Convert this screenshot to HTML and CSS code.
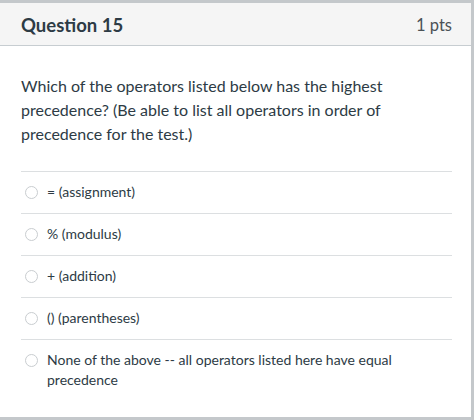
FILE: index.html
```html
<!DOCTYPE html>
<html lang="en">
<head>
    <meta charset="UTF-8">
    <title>Question 15</title>
    <link rel="stylesheet" href="styles.css">
</head>
<body>
    <!-- Quiz Question Card -->
    <div class="question">
        <div class="question-header">
            <span class="question-title">Question 15</span>
            <span class="question-points">1 pts</span>
        </div>

        <div class="question-body">
            <p class="question-text">Which of the operators listed below has the highest precedence? (Be able to list all operators in order of precedence for the test.)</p>

            <div class="answers">
                <label class="answer">
                    <span class="radio"></span>
                    <span class="answer-text">= (assignment)</span>
                </label>
                <label class="answer">
                    <span class="radio"></span>
                    <span class="answer-text">% (modulus)</span>
                </label>
                <label class="answer">
                    <span class="radio"></span>
                    <span class="answer-text">+ (addition)</span>
                </label>
                <label class="answer">
                    <span class="radio"></span>
                    <span class="answer-text">() (parentheses)</span>
                </label>
                <label class="answer">
                    <span class="radio"></span>
                    <span class="answer-text">None of the above -- all operators listed here have equal precedence</span>
                </label>
            </div>
        </div>
    </div>
</body>
</html>
```

FILE: styles.css
```css
/* General Styles */
body {
    margin: 0;
    padding: 0;
    font-family: Lato, "Liberation Sans", sans-serif;
    color: #2d3b45;
    background: #fff;
}

/* Question Card */
.question {
    width: 474px;
    height: 420px;
    border-top: 3px solid #c4c8cb;
    border-right: 3px solid #c4c8cb;
    border-bottom: 3px solid #c4c8cb;
    box-sizing: border-box;
}

.question-header {
    display: flex;
    justify-content: space-between;
    align-items: center;
    height: 43px;
    padding: 1px 19px 0 21px;
    box-sizing: border-box;
    background: #f5f5f5;
    border-bottom: 1px solid #c7cdd1;
}

.question-title {
    font-size: 18.5px;
    font-weight: 700;
}

.question-points {
    font-size: 16.5px;
    color: #4b5257;
}

/* Body */
.question-body {
    padding: 0 19px 0 21px;
}

.question-text {
    margin: 0;
    padding: 28px 0 25px;
    font-size: 16px;
    line-height: 24px;
}

.answer {
    display: flex;
    align-items: flex-start;
    padding: 10px 0 11px 4px;
    border-top: 1px solid #dcdfe1;
    font-size: 14px;
    line-height: 20px;
}

.radio {
    flex: none;
    width: 11px;
    height: 11px;
    margin: 4px 9px 0 0;
    border: 1px solid #c9cdd0;
    border-radius: 50%;
}
```
